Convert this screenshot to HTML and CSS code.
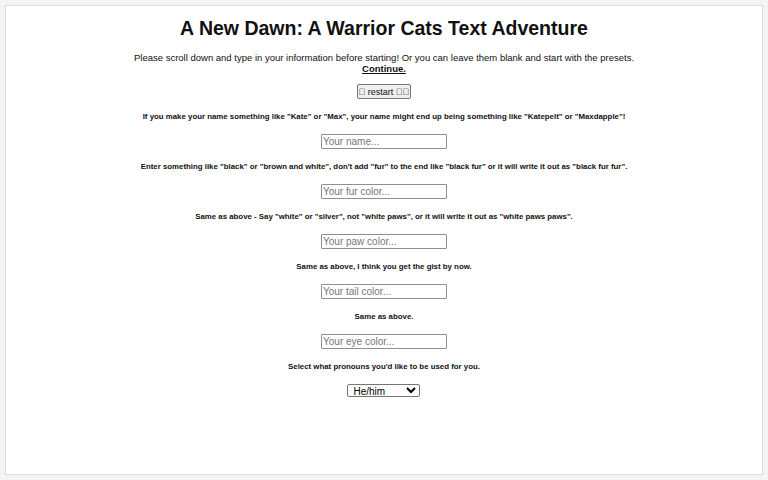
FILE: index.html
```
<!DOCTYPE html>
<html lang="en">
<head>
    <meta charset="UTF-8">
    <meta name="viewport" content="width=device-width, initial-scale=1.0">
    <title>A New Dawn</title>
    <link rel="stylesheet" href="styles.css">
</head>
<body>
    <div class="game-container">
        <h1 class="title">A New Dawn: A Warrior Cats Text Adventure</h1>
        <p class="intro">Please scroll down and type in your information before starting! Or you can leave them blank and start with the presets.<br>
            <a href="#" class="continue">Continue.</a></p>
        <button class="restart-btn">&#xE000; restart &#xE001;&#xE002;</button>

        <!-- Character setup -->
        <div class="field">
            <p class="hint">If you make your name something like "Kate" or "Max", your name might end up being something like "Katepelt" or "Maxdapple"!</p>
            <input type="text" placeholder="Your name...">
        </div>
        <div class="field">
            <p class="hint">Enter something like "black" or "brown and white", don't add "fur" to the end like "black fur" or it will write it out as "black fur fur".</p>
            <input type="text" placeholder="Your fur color...">
        </div>
        <div class="field">
            <p class="hint">Same as above - Say "white" or "silver", not "white paws", or it will write it out as "white paws paws".</p>
            <input type="text" placeholder="Your paw color...">
        </div>
        <div class="field">
            <p class="hint">Same as above, I think you get the gist by now.</p>
            <input type="text" placeholder="Your tail color...">
        </div>
        <div class="field">
            <p class="hint">Same as above.</p>
            <input type="text" placeholder="Your eye color...">
        </div>
        <div class="field">
            <p class="hint">Select what pronouns you'd like to be used for you.</p>
            <div class="select-wrap">
                <select>
                    <option>He/him</option>
                    <option>She/her</option>
                    <option>They/them</option>
                </select>
            </div>
        </div>
    </div>
</body>
</html>
```

FILE: styles.css
```
* {
    margin: 0;
    padding: 0;
    box-sizing: border-box;
}

body {
    font-family: "Liberation Sans", Arial, sans-serif;
    background-color: #f4f4f4;
    color: #111;
    padding: 5px;
}

.game-container {
    background: white;
    border: 1px solid #dcdcdc;
    height: 470px;
    padding-top: 10px;
    display: flex;
    flex-direction: column;
    align-items: center;
    text-align: center;
}

.title {
    font-size: 19.5px;
    line-height: 24px;
    font-weight: bold;
    margin-bottom: 12px;
}

.intro {
    font-size: 9.5px;
    line-height: 11px;
    margin-bottom: 10px;
}

.continue {
    color: #111;
    font-weight: bold;
}

.restart-btn {
    font-family: inherit;
    font-size: 9px;
    height: 15px;
    padding: 0 1px;
    background: #efefef;
    border: 1px solid #767676;
    border-radius: 2px;
    color: #111;
    margin-bottom: 13px;
}

.field {
    display: flex;
    flex-direction: column;
    align-items: center;
    gap: 12px;
    margin-bottom: 13px;
}

.hint {
    font-size: 7.85px;
    line-height: 10px;
    font-weight: bold;
}

.field input {
    width: 126px;
    height: 15px;
    font-family: inherit;
    font-size: 10px;
    padding: 0 1px;
    border: 1px solid #8f8f8f;
    border-radius: 1px;
}

.field input::placeholder {
    color: #777;
}

.select-wrap {
    text-align: left;
    line-height: 0;
}

.select-wrap select {
    width: 73px;
    height: 13px;
    font-family: inherit;
    font-size: 10px;
    text-align: left;
    text-align-last: left;
    padding-left: 1px;
    border: 1px solid #767676;
    border-radius: 2px;
    background: white;
}
```
